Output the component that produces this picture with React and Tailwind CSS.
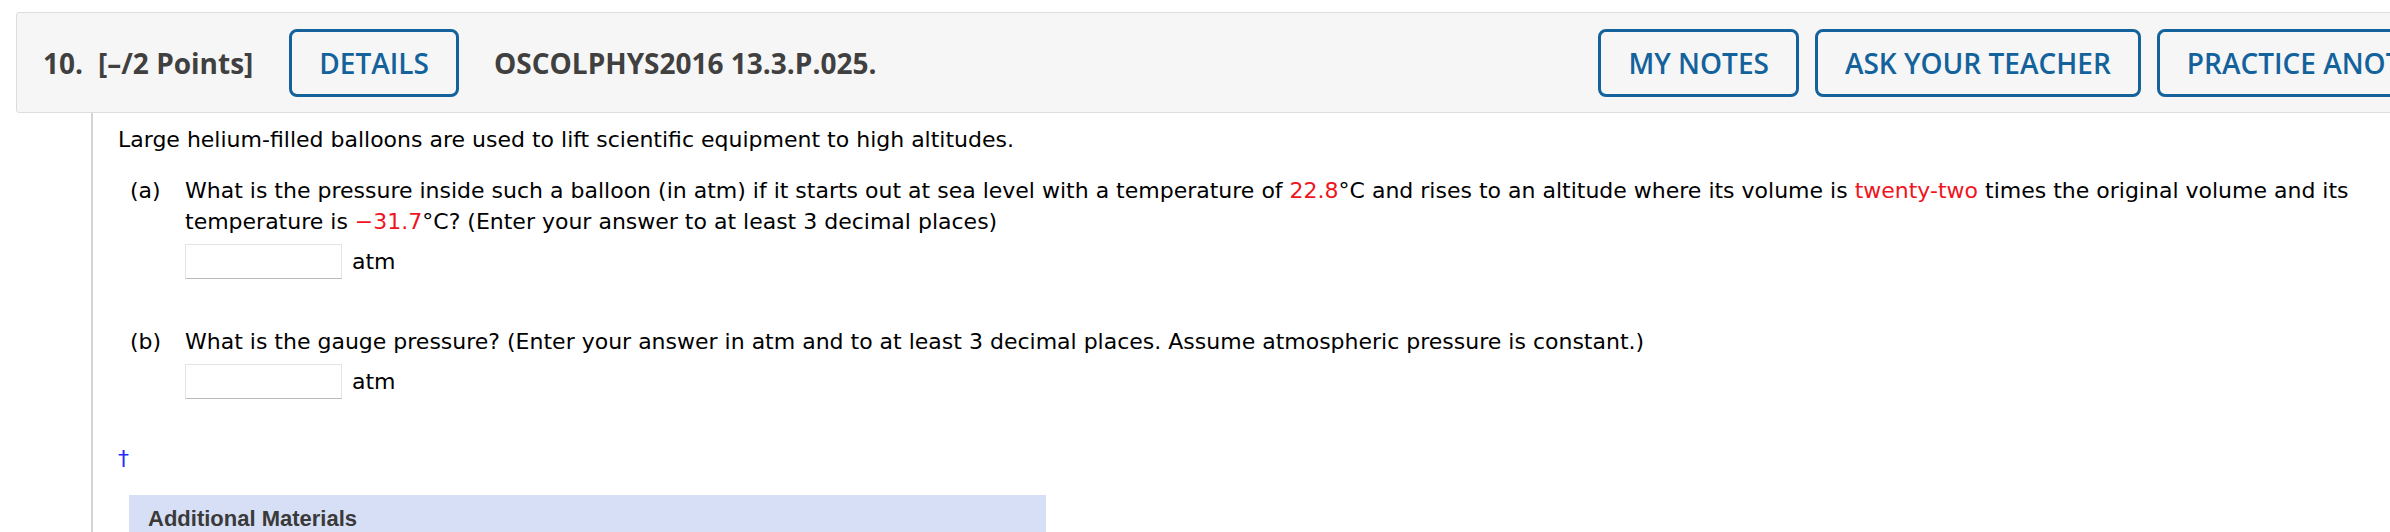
export default function App() {
  const btn =
    "flex h-[68px] shrink-0 items-center rounded-[8px] border-[3px] border-[#13629c] px-[27px] font-semibold text-[#13629c]";
  return (
    <div className="h-screen w-screen overflow-hidden bg-white">
      <header className="ml-[16px] mt-[12px] flex h-[101px] w-[2486px] items-center rounded-[3px] border border-[#dddddd] bg-[#f6f6f6] pl-[26px] pr-[15px] font-['Open_Sans',sans-serif] text-[28px] text-[#404040]">
        <span className="font-bold">10.</span>
        <span className="ml-[15px] font-bold">[–/2 Points]</span>
        <button className={`${btn} ml-[36px]`}>DETAILS</button>
        <span className="ml-[35px] font-bold">OSCOLPHYS2016 13.3.P.025.</span>
        <div className="ml-auto flex gap-[16px]">
          <button className={btn}>MY NOTES</button>
          <button className={btn}>ASK YOUR TEACHER</button>
          <button className={btn}>PRACTICE ANOTHER</button>
        </div>
      </header>

      <div className="ml-[91px] border-l-2 border-[#d4d4d4] pl-[25px] pt-[11px] font-['DejaVu_Sans',sans-serif] text-[22px] leading-[31px] text-black">
        <p>Large helium-filled balloons are used to lift scientific equipment to high altitudes.</p>

        <div className="mt-[20px] flex">
          <span className="w-[67px] shrink-0 pl-[12px]">(a)</span>
          <div>
            <p>
              What is the pressure inside such a balloon (in atm) if it starts out at sea level with a temperature of{" "}
              <span className="text-[#f0141e]">22.8</span>°C and rises to an altitude where its volume is{" "}
              <span className="text-[#f0141e]">twenty-two</span> times the original volume and its
              <br />
              temperature is <span className="text-[#f0141e]">−31.7</span>°C? (Enter your answer to at least 3 decimal places)
            </p>
            <div className="mt-[7px] flex items-center">
              <div className="h-[35px] w-[157px] border border-[#e4e4e4] border-b-[#b9b9b9] bg-white" />
              <span className="ml-[10px]">atm</span>
            </div>
          </div>
        </div>

        <div className="mt-[47px] flex">
          <span className="w-[67px] shrink-0 pl-[12px]">(b)</span>
          <div>
            <p>
              What is the gauge pressure? (Enter your answer in atm and to at least 3 decimal places. Assume atmospheric
              pressure is constant.)
            </p>
            <div className="mt-[7px] flex items-center">
              <div className="h-[35px] w-[157px] border border-[#e4e4e4] border-b-[#b9b9b9] bg-white" />
              <span className="ml-[10px]">atm</span>
            </div>
          </div>
        </div>

        <p className="mt-[44px] text-[#1f2bff]">†</p>

        <div className="ml-[11px] mt-[21px] h-[60px] w-[917px] bg-[#d6dff5] pl-[19px] pt-[13px] font-['Liberation_Sans',sans-serif] text-[22px] font-bold leading-[22px] text-[#3a3a3a]">
          Additional Materials
        </div>
      </div>
    </div>
  );
}
